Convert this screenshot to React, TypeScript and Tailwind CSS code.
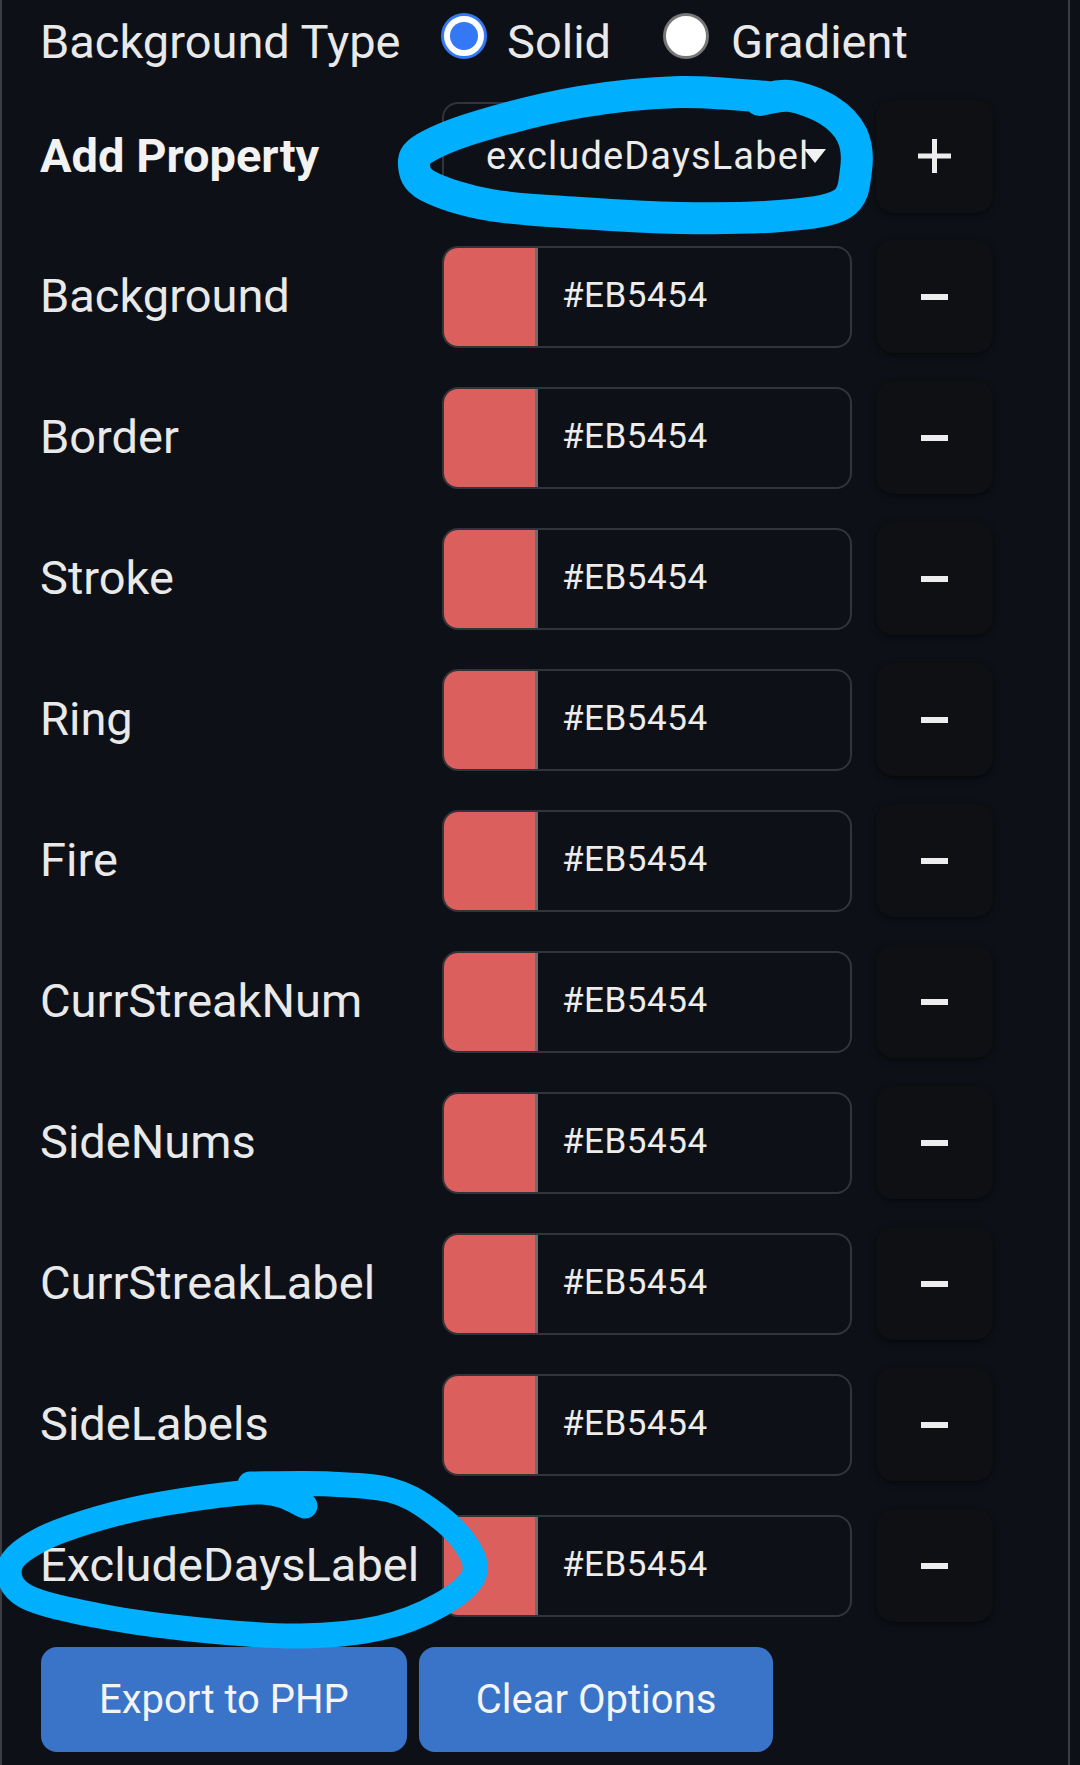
import type { ReactNode } from 'react'

const rows = [
  'Background',
  'Border',
  'Stroke',
  'Ring',
  'Fire',
  'CurrStreakNum',
  'SideNums',
  'CurrStreakLabel',
  'SideLabels',
  'ExcludeDaysLabel',
]

type Pt = [number, number]

// smooth line through the points (catmull-rom turned into cubic beziers)
function smooth(points: Pt[]): string {
  let d = `M${points[0][0]},${points[0][1]}`
  for (let i = 0; i < points.length - 1; i++) {
    const p0 = points[i - 1] ?? points[i]
    const p1 = points[i]
    const p2 = points[i + 1]
    const p3 = points[i + 2] ?? p2
    const c1x = p1[0] + (p2[0] - p0[0]) / 6
    const c1y = p1[1] + (p2[1] - p0[1]) / 6
    const c2x = p2[0] - (p3[0] - p1[0]) / 6
    const c2y = p2[1] - (p3[1] - p1[1]) / 6
    d += ` C${c1x},${c1y} ${c2x},${c2y} ${p2[0]},${p2[1]}`
  }
  return d
}

const selectLoop: Pt[] = [
  [767, 97], [680, 92], [580, 102], [480, 126], [425, 148], [414, 165], [428, 186],
  [490, 205], [580, 213], [680, 218], [780, 216], [842, 204], [856, 170], [852, 135],
  [828, 110], [790, 96], [760, 100],
]

const labelLoop: Pt[] = [
  [305, 1506], [262, 1492], [167, 1503], [100, 1518], [40, 1540], [10, 1566], [25, 1596],
  [100, 1616], [200, 1630], [300, 1636], [380, 1628], [440, 1605], [474, 1575],
  [465, 1543], [430, 1510], [390, 1490], [330, 1484], [250, 1484],
]

function SquareButton({ children }: { children: ReactNode }) {
  return (
    <div className="ml-[24px] flex h-[113px] w-[117px] shrink-0 items-center justify-center rounded-[18px] bg-[#0e1014] shadow-[0_2px_6px_rgba(0,0,0,0.6)]">
      {children}
    </div>
  )
}

function ColorRow({ label }: { label: string }) {
  return (
    <div className="mt-[28px] flex h-[113px] items-center pl-[38px]">
      <div className="w-[402px] shrink-0 whitespace-nowrap text-[47px] text-[#e9e9e9]">{label}</div>
      <div className="flex h-[102px] w-[410px] shrink-0 overflow-hidden rounded-[16px] border-2 border-[#31353b]">
        <div className="w-[94px] shrink-0 border-r-[3px] border-[#6c6c6c] bg-[#db5f5c]" />
        <div className="flex items-center pl-[24px] text-[35px] tracking-[0.015em] text-[#ececec]">#EB5454</div>
      </div>
      <SquareButton>
        <div className="h-[6px] w-[27px] bg-[#ededed]" />
      </SquareButton>
    </div>
  )
}

export default function App() {
  return (
    <div className="relative h-[1765px] w-[1080px] overflow-hidden bg-[#0d1117] font-['Roboto',sans-serif]">
      <div className="h-full w-[1070px] border-x-2 border-[#3a3e44]">
        <div className="flex h-[72px] items-center pl-[38px]">
          <div className="w-[401px] shrink-0 whitespace-nowrap pt-[12px] text-[47px] text-[#e9e9e9]">Background Type</div>
          <div className="flex h-[46px] w-[46px] shrink-0 items-center justify-center rounded-full border-[3px] border-[#3478f6] bg-white">
            <div className="h-[28px] w-[28px] rounded-full bg-[#3478f6]" />
          </div>
          <span className="ml-[20px] pt-[12px] text-[47px] text-[#e9e9e9]">Solid</span>
          <div className="ml-[52px] h-[46px] w-[46px] shrink-0 rounded-full border-[3px] border-[#777777] bg-white" />
          <span className="ml-[22px] pt-[12px] text-[47px] text-[#e9e9e9]">Gradient</span>
        </div>

        <div className="mt-[28px] flex h-[112px] items-center pl-[38px]">
          <div className="w-[402px] shrink-0 whitespace-nowrap text-[47px] font-bold text-[#f2f2f2]">Add Property</div>
          <div className="flex h-[108px] w-[410px] shrink-0 items-center overflow-hidden rounded-[16px] border-2 border-[#31353b] pl-[42px]">
            <span className="whitespace-nowrap text-[38px] tracking-[0.03em] text-[#ececec]">excludeDaysLabel</span>
            <svg className="-ml-[5px] shrink-0" width="22" height="14" viewBox="0 0 22 14">
              <path d="M0 0 H22 L11 14 Z" fill="#f2f2f2" />
            </svg>
          </div>
          <SquareButton>
            <svg width="33" height="34" viewBox="0 0 33 34">
              <rect x="14" y="0" width="5" height="34" fill="#ededed" />
              <rect x="0" y="14.5" width="33" height="5" fill="#ededed" />
            </svg>
          </SquareButton>
        </div>

        {rows.map((r) => (
          <ColorRow key={r} label={r} />
        ))}

        <div className="mt-[25px] flex gap-[12px] pl-[39px]">
          <button
            type="button"
            className="h-[105px] rounded-[16px] bg-[#3a74c9] px-[58px] text-[40px] text-[#f4f4f4]"
          >
            Export to PHP
          </button>
          <button
            type="button"
            className="h-[105px] rounded-[16px] bg-[#3a74c9] px-[57px] text-[40px] text-[#f4f4f4]"
          >
            Clear Options
          </button>
        </div>
      </div>

      <svg className="pointer-events-none absolute left-0 top-0" width="1080" height="1765" viewBox="0 0 1080 1765">
        <path d={smooth(selectLoop)} fill="none" stroke="#00b0ff" strokeWidth="32" strokeLinecap="round" strokeLinejoin="round" />
        <path d={smooth(labelLoop)} fill="none" stroke="#00b0ff" strokeWidth="25" strokeLinecap="round" strokeLinejoin="round" />
      </svg>
    </div>
  )
}
